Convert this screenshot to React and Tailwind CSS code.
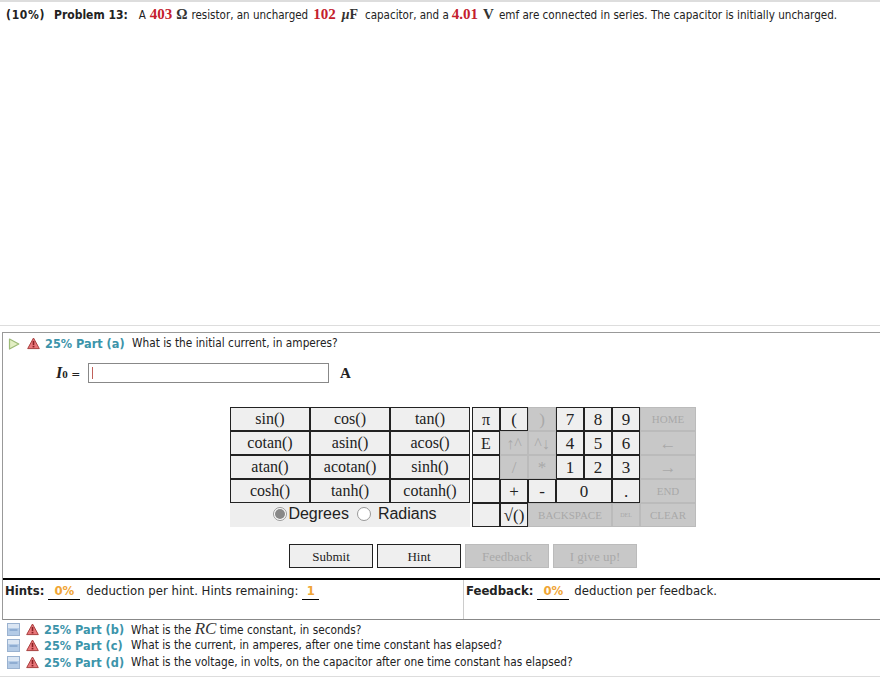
import React from 'react'

const serif = "font-['Liberation_Serif',serif]"

function Warn() {
  return (
    <svg width="13" height="13" viewBox="0 0 13 13" className="shrink-0">
      <path d="M6.5 1 L12.3 11.6 H0.7 Z" fill="#e8767a" stroke="#a8403f" strokeWidth="1" strokeLinejoin="round" />
      <path d="M6.5 4 V8" stroke="#8a1f22" strokeWidth="1.6" />
      <rect x="5.6" y="8.8" width="1.8" height="1.6" fill="#8a1f22" />
    </svg>
  )
}

function Play() {
  return (
    <svg width="12" height="12" viewBox="0 0 12 12" className="shrink-0">
      <path d="M1.5 1 L10.8 6 L1.5 11 Z" fill="#e3efc4" stroke="#9dbb78" strokeWidth="1.2" strokeLinejoin="round" />
    </svg>
  )
}

function Minus() {
  return (
    <svg width="13" height="13" viewBox="0 0 13 13" className="shrink-0">
      <rect x="0.5" y="0.5" width="12" height="12" fill="#b4cbe6" stroke="#9ab2d0" />
      <rect x="1" y="1" width="11" height="4" fill="#dbe6f3" />
      <rect x="2.5" y="6" width="8" height="2" fill="#8fadd2" />
    </svg>
  )
}

function Key({ children, off, className = '' }) {
  const look = off
    ? 'bg-[#c8c8c8] text-[#a9a9a9] border border-[#bbbbbb]'
    : 'bg-[#efefef] text-[#222] border border-[#222]'
  return <div className={`flex items-center justify-center ${look} ${className}`}>{children}</div>
}

function Part({ label, children }) {
  return (
    <div className="flex items-center h-[16.5px] pl-[7px]">
      <Minus />
      <span className="ml-[6px]"><Warn /></span>
      <span className="ml-[5px] font-bold text-[12.6px] text-[#3c94aa] w-[87px]">25% Part ({label})</span>
      <span>{children}</span>
    </div>
  )
}

const funcs = ['sin()', 'cos()', 'tan()', 'cotan()', 'asin()', 'acos()', 'atan()', 'acotan()', 'sinh()', 'cosh()', 'tanh()', 'cotanh()']

export default function App() {
  return (
    <div className="w-[880px] h-[680px] overflow-hidden bg-white text-[#222] text-[11.75px] leading-[17px] font-['DejaVu_Sans_Condensed','DejaVu_Sans',sans-serif]">
      {/* problem statement */}
      <div className="h-[326px] border-t-2 border-[#dddddd] border-b border-b-[#dddddd] pl-[6px] pt-[4px]">
        <div className="flex items-baseline whitespace-pre text-[11.5px]">
          <span className="font-bold text-[12px] tracking-[0.7px] w-[48px]">(10%)</span>
          <span className="font-bold text-[12px]">Problem 13:</span>
          <span className="ml-[11px] w-[11px]">A</span>
          <b className={`${serif} text-[15px] text-[#c4202c]`}>403</b>
          <b className={`${serif} text-[14px] text-[#333] ml-[4px] mr-[4px]`}>Ω</b>
          <span>resistor, an uncharged</span>
          <b className={`${serif} text-[15px] text-[#c4202c] ml-[5px]`}>102</b>
          <span className={`${serif} text-[14px] ml-[6px] font-bold text-[#333]`}><i>μ</i>F</span>
          <span className="ml-[7px]">capacitor, and a</span>
          <b className={`${serif} text-[15px] text-[#c4202c] ml-[3px]`}>4.01</b>
          <b className={`${serif} text-[15px] text-[#333] mx-[5px]`}>V</b>
          <span className="text-[11.6px]">emf are connected in series. The capacitor is initially uncharged.</span>
        </div>
      </div>

      <div className="h-[6px]" />

      {/* part a */}
      <div className="ml-[2px] h-[246px] border-t border-l border-[#999999]">
        <div className="flex items-center h-[17px] mt-[2px] pl-[5px]">
          <Play />
          <span className="ml-[7px]"><Warn /></span>
          <span className="ml-[5px] font-bold text-[12.6px] text-[#3c94aa] w-[87px]">25% Part (a)</span>
          <span>What is the initial current, in amperes?</span>
        </div>

        <div className="flex items-center h-[20px] mt-[11px] pl-[53px]">
          <span className={`${serif} text-[16px] w-[32px] whitespace-pre`}><b><i>I</i></b><span className="text-[11px] font-bold">0</span><span className="font-['DejaVu_Sans_Condensed','DejaVu_Sans',sans-serif] text-[12px]"> =</span></span>
          <div className="w-[241px] h-[20px] border border-[#888888] flex items-center pl-[3px]">
            <span className="w-[1px] h-[12px] bg-[#c0605a]" />
          </div>
          <b className={`${serif} text-[15px] ml-[11px]`}>A</b>
        </div>

        <div className="flex mt-[24px] ml-[227px]">
          <div className="w-[240px]">
            <div className={`grid grid-cols-3 auto-rows-[24px] ${serif} text-[16px]`}>
              {funcs.map((f) => (
                <Key key={f} className="pb-[1px]">{f}</Key>
              ))}
            </div>
            <div className="h-[24px] bg-[#eeeeee] flex items-center justify-center pl-[10px] pb-[3px] font-['Liberation_Sans',sans-serif] text-[16px]">
              <span className="w-[14px] h-[14px] rounded-full border border-[#999999] bg-white flex items-center justify-center">
                <span className="w-[10px] h-[10px] rounded-full bg-[#888888]" />
              </span>
              <span className="ml-[1px]">Degrees</span>
              <span className="ml-[8px] w-[14px] h-[14px] rounded-full border border-[#999999] bg-white" />
              <span className="ml-[7px]">Radians</span>
            </div>
          </div>

          <div className={`ml-[2px] grid grid-cols-[repeat(6,28px)_56px] auto-rows-[24px] w-[224px] ${serif} text-[17px]`}>
            <Key className="text-[16px]">π</Key>
            <Key>(</Key>
            <Key off>)</Key>
            <Key>7</Key>
            <Key>8</Key>
            <Key>9</Key>
            <Key off className="text-[11px]">HOME</Key>

            <Key className="text-[16px]">E</Key>
            <Key off className="text-[16px]">↑^</Key>
            <Key off className="text-[16px]">^↓</Key>
            <Key>4</Key>
            <Key>5</Key>
            <Key>6</Key>
            <Key off>←</Key>

            <Key />
            <Key off>/</Key>
            <Key off>*</Key>
            <Key>1</Key>
            <Key>2</Key>
            <Key>3</Key>
            <Key off>→</Key>

            <Key />
            <Key>+</Key>
            <Key>-</Key>
            <Key className="col-span-2">0</Key>
            <Key>.</Key>
            <Key off className="text-[11px]">END</Key>

            <Key />
            <Key>√()</Key>
            <Key off className="col-span-3 text-[11px]">BACKSPACE</Key>
            <Key off className="text-[6px]">DEL</Key>
            <Key off className="text-[11px]">CLEAR</Key>
          </div>
        </div>

        <div className={`flex gap-[4px] mt-[17px] ml-[286px] ${serif} text-[13px]`}>
          <Key className="w-[84px] h-[24px]">Submit</Key>
          <Key className="w-[84px] h-[24px]">Hint</Key>
          <Key off className="w-[84px] h-[24px] border-[#aaaaaa]">Feedback</Key>
          <Key off className="w-[84px] h-[24px] border-[#aaaaaa]">I give up!</Key>
        </div>
      </div>

      {/* hints and feedback */}
      <div className="ml-[2px] h-[42px] border-l border-l-[#999999] text-[13px]">
        <div className="h-[42px] border-t-[2px] border-t-black border-b border-b-[#888888] flex">
          <div className="w-[461px] border-r border-[#cccccc] pl-[2px] pt-[2px]">
            <b>Hints:</b>
            <span className="inline-block w-[32px] ml-[4px] mr-[6px] text-center font-bold text-[#f0a535] border-b border-black">0%</span>
            deduction per hint. Hints remaining:
            <span className="inline-block w-[17px] ml-[4px] text-center font-bold text-[#f0a535] border-b border-black">1</span>
          </div>
          <div className="pl-[2px] pt-[2px]">
            <b>Feedback:</b>
            <span className="inline-block w-[32px] ml-[4px] mr-[5px] text-center font-bold text-[#f0a535] border-b border-black">0%</span>
            deduction per feedback.
          </div>
        </div>
      </div>

      {/* other parts */}
      <div className="border-b border-[#dddddd] h-[57px] pt-[1px]">
        <Part label="b">
          What is the <i className={`${serif} text-[17px] text-[#333]`}>RC</i> time constant, in seconds?
        </Part>
        <Part label="c">What is the current, in amperes, after one time constant has elapsed?</Part>
        <Part label="d">What is the voltage, in volts, on the capacitor after one time constant has elapsed?</Part>
      </div>
    </div>
  )
}
